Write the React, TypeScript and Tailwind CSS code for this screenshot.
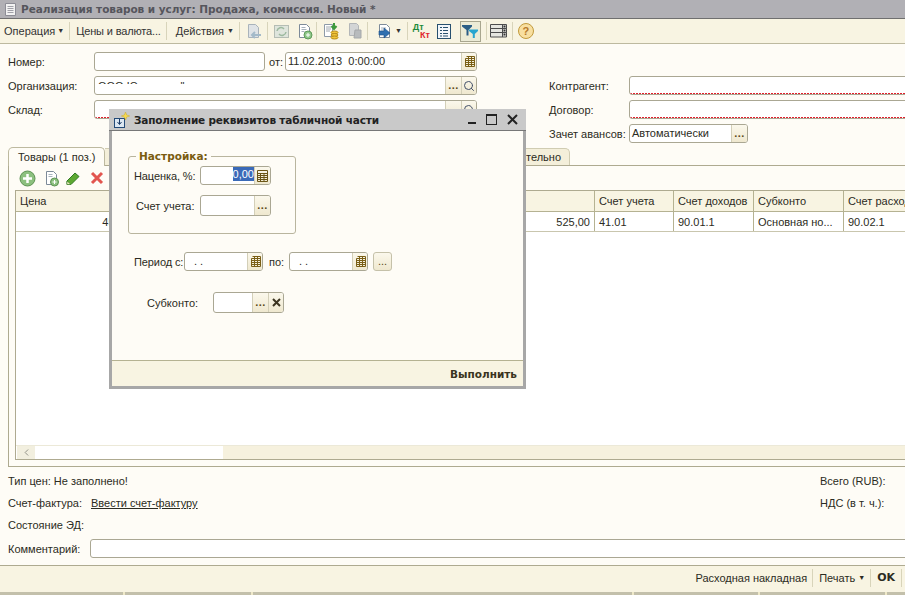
import { ChevronLeft, Search } from "lucide-react";
import type { ReactNode } from "react";

function GridIcon() {
  return (
    <svg width="11" height="11" viewBox="0 0 11 11" fill="none" stroke="#7a5f16" strokeWidth="1">
      <path d="M2.500.5h8v10h-9v-8h9M1.500 4.500h9M1.500 6.500h9M1.500 8.500h9M4.500.5v10M7.500.5v10" />
    </svg>
  );
}

function CalcIcon() {
  return (
    <svg width="11" height="12" viewBox="0 0 11 12" fill="none" stroke="#6b5516" strokeWidth="1">
      <path d="M.5.5h10v11H.5zM.5 3.500h10M.5 5.500h10M.5 7.500h10M.5 9.500h10M3.500 3.500v8M7 3.500v8" />
    </svg>
  );
}

function Dots() {
  return <span className="relative -top-[1px] text-[11px] font-bold tracking-[0.5px] text-[#5a4a1a]">...</span>;
}

function FieldButton({ children, w = "w-[16px]" }: { children: ReactNode; w?: string }) {
  return (
    <div className={`flex h-full shrink-0 items-center justify-center border-l border-[#d3cfb8] bg-gradient-to-b from-[#fbf8ec] to-[#efe8cf] ${w}`}>
      {children}
    </div>
  );
}

function Field({
  className = "",
  children,
  required = false,
  buttons,
}: {
  className?: string;
  children?: ReactNode;
  required?: boolean;
  buttons?: ReactNode;
}) {
  return (
    <div className={`flex h-[19px] shrink-0 overflow-hidden rounded-[3px] border border-[#aaa793] bg-white ${className}`}>
      <div className="flex min-w-0 flex-1 flex-col">
        <div className="min-h-0 flex-1 overflow-hidden pl-[2px] leading-[17px]">{children}</div>
        {required ? (
          <div className="h-px shrink-0 bg-[repeating-linear-gradient(90deg,#e0202c_0_2px,#ffffff_2px_3px)]" />
        ) : null}
      </div>
      {buttons}
    </div>
  );
}

function Sep() {
  return <div className="mx-[5px] h-[18px] w-px shrink-0 bg-[#d8d4ba]" />;
}

function NarrowSep() {
  return <div className="mx-[3px] h-[18px] w-px shrink-0 bg-[#d8d4ba]" />;
}

function DocBase({ faded = false }: { faded?: boolean }) {
  return (
    <path
      d="M3.500 1.500h7l3 3v10h-10z"
      fill={faded ? "#dfe3e6" : "#fff"}
      stroke={faded ? "#a9b3bb" : "#7d8a99"}
    />
  );
}

function Toolbar() {
  return (
    <div className="flex h-[25px] items-center border-b border-[#bdb99f] bg-[#f8f4e2] pl-[4px] text-[#333]">
      <span>Операция</span>
      <span className="ml-[2px] text-[7px]">▼</span>
      <Sep />
      <span className="ml-[1px] tracking-[-0.15px]">Цены и валюта...</span>
      <Sep />
      <span className="ml-[4px]">Действия</span>
      <span className="ml-[3px] text-[7px]">▼</span>
      <Sep />
      <svg width="17" height="17" viewBox="0 0 17 17" fill="none">
        <DocBase faded />
        <path d="M16 12H7M10 9l-3 3 3 3" stroke="#a4bac9" strokeWidth="2" />
      </svg>
      <Sep />
      <svg width="17" height="17" viewBox="0 0 17 17" fill="none">
        <rect x="1.500" y="2.500" width="14" height="12" fill="#dfe5dc" stroke="#b5bdb4" />
        <path d="M4 8a4 4 0 0 1 7-2M13 9a4 4 0 0 1-7 2" stroke="#9db99f" strokeWidth="1.500" />
      </svg>
      <div className="w-[6px]" />
      <svg width="17" height="17" viewBox="0 0 17 17" fill="none">
        <DocBase />
        <path d="M5.500 4.500h4M5.500 6.500h5M5.500 8.500h3" stroke="#a8b3bd" />
        <circle cx="12" cy="12" r="4" fill="#8fc78a" stroke="#5d9a59" />
        <path d="M10 12h4M12 10v4" stroke="#fff" />
      </svg>
      <NarrowSep />
      <div className="w-[2px]" />
      <svg width="18" height="18" viewBox="0 0 18 18" fill="none">
        <path d="M2.500 2.500h8v12h-8z" fill="#fff" stroke="#8d9aa8" />
        <path d="M4 5h5M4 7h5M4 9h4" stroke="#a0a8b0" />
        <path d="M12 1v5M9.500 4l2.500 3 2.500-3" stroke="#3d9a3d" strokeWidth="2" />
        <ellipse cx="12.500" cy="10.500" rx="3.500" ry="1.500" fill="#f1c53b" stroke="#b98d1b" />
        <ellipse cx="12.500" cy="13" rx="3.500" ry="1.500" fill="#f1c53b" stroke="#b98d1b" />
        <ellipse cx="12.500" cy="15.500" rx="3.500" ry="1.500" fill="#f1c53b" stroke="#b98d1b" />
      </svg>
      <div className="w-[7px]" />
      <svg width="17" height="18" viewBox="0 0 17 18" fill="none">
        <path d="M2.500 1.500h7l2 2v10h-9z" fill="#d3d5d6" stroke="#b3b6b8" />
        <path d="M8 8h6v8H7z" fill="#b8bbbd" stroke="#a5a8aa" />
      </svg>
      <NarrowSep />
      <div className="w-[5px]" />
      <svg width="17" height="17" viewBox="0 0 17 17" fill="none">
        <DocBase />
        <path d="M5 5h5M5 7h3" stroke="#a8b3bd" />
        <path d="M3 8h5V5l6 5-6 5v-3H3z" fill="#2f6fb0" stroke="#1d4f86" strokeWidth=".6" />
      </svg>
      <span className="ml-[2px] text-[7px]">▼</span>
      <Sep />
      <div className="flex w-[17px] flex-col font-['Liberation_Sans',sans-serif] text-[9px] leading-[8px] font-bold">
        <span className="text-[#1d8a3a]">Дт</span>
        <span className="self-end text-[#e0242c]">Кт</span>
      </div>
      <div className="w-[6px]" />
      <svg width="16" height="17" viewBox="0 0 16 17" fill="none">
        <rect x="1.500" y="1.500" width="13" height="14" fill="#f2f6fa" stroke="#27506f" />
        <path d="M4 4.500h2M7 4.500h5M4 7.500h2M7 7.500h5M4 10.500h2M7 10.500h5M4 13h2M7 13h5" stroke="#27506f" />
      </svg>
      <div className="w-[8px]" />
      <div className="flex h-[21px] w-[21px] shrink-0 items-center justify-center border border-[#a8a68f] bg-[#ecebd6]">
        <svg width="16" height="13" viewBox="0 0 16 13">
          <path d="M0 0h10v1.500L6.500 5v5.500H4.500V5L0 1.500z" fill="#2a5d85" />
          <path d="M7 4.500h9v1.500l-3.200 3v4h-2V9L7 6z" fill="#29a5cf" />
        </svg>
      </div>
      <Sep />
      <svg className="-ml-[2px]" width="17" height="16" viewBox="0 0 17 16" fill="none">
        <path d="M.5 1.500h16v4H.5zM.5 5.500h16v4H.5zM.5 9.500h16v4.500H.5z" fill="#e6e6e0" stroke="#4c4c4c" />
        <path d="M12.500 1.500v12.500" stroke="#4c4c4c" />
        <rect x="13.500" y="2.500" width="2" height="2" fill="#333" />
        <rect x="13.500" y="6.500" width="2" height="2" fill="#333" />
        <rect x="13.500" y="10.500" width="2" height="2" fill="#333" />
      </svg>
      <Sep />
      <div className="flex h-[16px] w-[16px] items-center justify-center rounded-full border border-[#c19a3c] bg-[#f8dfa0] text-[11px] leading-none font-bold text-[#b5792a]">
        ?
      </div>
    </div>
  );
}

function TabTools() {
  return (
    <div className="flex h-[24px] shrink-0 items-center gap-[7px] pl-[10px]">
      <svg width="17" height="17" viewBox="0 0 17 17">
        <circle cx="8.500" cy="8.500" r="7.500" fill="#8cc07f" stroke="#5c9252" />
        <path d="M4 8.500h9M8.500 4v9" stroke="#fff" strokeWidth="2.500" />
      </svg>
      <svg width="16" height="17" viewBox="0 0 16 17" fill="none">
        <DocBase />
        <path d="M5.500 4.500h4M5.500 6.500h4" stroke="#a8b3bd" />
        <circle cx="11.500" cy="12" r="4" fill="#8cc07f" stroke="#5c9252" />
        <path d="M9.500 12h4M11.500 10v4" stroke="#fff" />
      </svg>
      <svg width="15" height="15" viewBox="0 0 15 15">
        <path d="M1 10 9 2l4 3.500-8 8H1z" fill="#5da832" stroke="#2f7a22" />
        <path d="M1 10l4 3.500H1z" fill="#f2e9c0" stroke="#2f7a22" strokeWidth=".5" />
      </svg>
      <svg className="ml-[2px]" width="14" height="14" viewBox="0 0 14 14">
        <path d="M2 2l10 10M12 2 2 12" stroke="#e2554f" strokeWidth="3" />
      </svg>
    </div>
  );
}

function HeadCell({ className, children }: { className: string; children?: ReactNode }) {
  return (
    <div className={`flex h-full shrink-0 items-center overflow-hidden border-r border-[#b5b292] pl-[4px] whitespace-nowrap ${className}`}>
      {children}
    </div>
  );
}

function Dialog() {
  return (
    <div className="absolute top-[109px] left-[109px] z-20 flex h-[280px] w-[417px] flex-col border-[3px] border-t-0 border-[#a7a7a7] bg-[#fefcf6]">
      <div className="-mx-[3px] flex h-[22px] shrink-0 items-center border-b border-[#777] bg-[#c9c9c9] pr-[8px] pl-[4px] font-['DejaVu_Sans',sans-serif] text-[10.5px] font-bold text-[#222]">
        <svg width="18" height="18" viewBox="0 0 18 18" fill="none">
          <rect x="1.500" y="7.500" width="10" height="9" fill="#dce7f2" stroke="#234a78" />
          <path d="M6.500 8v5M4.500 11l2 2.500 2-2.500" stroke="#1a3a66" />
          <path d="M12.500 1l1.200 3 3 1-3 1-1.200 3-1.200-3-3-1 3-1z" fill="#f6d94c" stroke="#c9a92e" strokeWidth=".5" />
        </svg>
        <span className="ml-[3px] flex-1 tracking-[-0.18px]">Заполнение реквизитов табличной части</span>
        <div className="mt-[6px] h-[2px] w-[8px] bg-[#222]" />
        <div className="ml-[10px] h-[11px] w-[11px] border-[1.500px] border-t-2 border-[#222]" />
        <svg className="ml-[10px]" width="11" height="11" viewBox="0 0 11 11">
          <path d="M1 1l9 9M10 1l-9 9" stroke="#222" strokeWidth="2" />
        </svg>
      </div>

      <div className="flex-1 pt-[25px] pl-[16px]">
        <div className="relative flex h-[78px] w-[168px] flex-col rounded-[3px] border border-[#b9b59e] pt-[9px]">
          <span className="absolute -top-[8px] left-[7px] bg-[#fefcf6] px-[3px] font-['DejaVu_Sans',sans-serif] text-[10.5px] leading-[14px] font-bold text-[#7a5c10]">
            Настройка:
          </span>
          <div className="flex items-center pl-[5px]">
            <span className="w-[66px] tracking-[-0.1px]">Наценка, %:</span>
            <Field
              className="w-[71px]"
              buttons={
                <FieldButton>
                  <CalcIcon />
                </FieldButton>
              }
            >
              <div className="flex justify-end">
                <span className="bg-[#3a6ab8] leading-[14px] text-white">0,00</span>
              </div>
            </Field>
          </div>
          <div className="mt-[10px] flex items-center pl-[7px]">
            <span className="w-[64px]">Счет учета:</span>
            <Field
              className="h-[21px] w-[71px]"
              buttons={
                <FieldButton>
                  <Dots />
                </FieldButton>
              }
            />
          </div>
        </div>

        <div className="mt-[18px] ml-[6px] flex items-center">
          <span className="w-[50px] tracking-[-0.1px]">Период с:</span>
          <Field
            className="w-[79px]"
            buttons={
              <FieldButton w="w-[15px]">
                <GridIcon />
              </FieldButton>
            }
          >
            <span className="pl-[7px]">. .</span>
          </Field>
          <span className="ml-[6px] w-[20px]">по:</span>
          <Field
            className="w-[79px]"
            buttons={
              <FieldButton w="w-[15px]">
                <GridIcon />
              </FieldButton>
            }
          >
            <span className="pl-[7px]">. .</span>
          </Field>
          <div className="ml-[5px] flex h-[19px] w-[19px] items-center justify-center rounded-[3px] border border-[#c5c1a9] bg-gradient-to-b from-[#fbf8ec] to-[#efe8cf]">
            <span className="relative -top-[1px] text-[#5a4a1a]">...</span>
          </div>
        </div>

        <div className="mt-[21px] ml-[19px] flex items-center">
          <span className="w-[66px]">Субконто:</span>
          <Field
            className="h-[21px] w-[71px]"
            buttons={
              <>
                <FieldButton>
                  <Dots />
                </FieldButton>
                <FieldButton w="w-[15px]">
                  <svg width="9" height="9" viewBox="0 0 9 9">
                    <path d="M1 1l7 7M8 1 1 8" stroke="#3c3420" strokeWidth="2" />
                  </svg>
                </FieldButton>
              </>
            }
          />
        </div>
      </div>

      <div className="flex h-[26px] shrink-0 items-center justify-end border-t border-[#b5b292] bg-[#f8f4e2] pr-[6px] font-['DejaVu_Sans',sans-serif] text-[10.5px] font-bold text-[#3a3420]">
        Выполнить
      </div>
    </div>
  );
}

export default function App() {
  return (
    <div className="relative flex h-[595px] w-[905px] flex-col overflow-hidden bg-[#fefcf6] font-['Liberation_Sans',sans-serif] text-[11px] leading-[14px] whitespace-nowrap text-[#2b2b22]">
      <div className="flex h-[19px] shrink-0 items-center border-b border-[#6f6f6f] bg-[#b1b0b5] pl-[4px] font-['DejaVu_Sans',sans-serif] text-[10.5px] font-bold tracking-[-0.05px] text-[#55555c]">
        <svg width="13" height="15" viewBox="0 0 13 15" fill="none">
          <path d="M1.500 1.500h10v12h-10z" fill="#f2f2f2" stroke="#8d8d96" />
          <path d="M3.500 4.500h6M3.500 6.500h6M3.500 8.500h6M3.500 10.500h6" stroke="#a0a0a8" />
        </svg>
        <span className="ml-[4px]">Реализация товаров и услуг: Продажа, комиссия. Новый *</span>
      </div>

      <Toolbar />

      <div className="flex h-[103px] shrink-0 pt-[8px] pl-[8px]">
        <div className="flex w-[541px] shrink-0 flex-col gap-[5px]">
          <div className="flex items-center">
            <span className="w-[86px]">Номер:</span>
            <Field className="w-[171px]" />
            <span className="ml-[4px] w-[16px]">от:</span>
            <Field
              className="w-[192px]"
              buttons={
                <FieldButton w="w-[15px]">
                  <GridIcon />
                </FieldButton>
              }
            >
              11.02.2013&nbsp; 0:00:00
            </Field>
          </div>
          <div className="flex items-center">
            <span className="w-[86px]">Организация:</span>
            <Field
              className="w-[383px]"
              buttons={
                <>
                  <FieldButton>
                    <Dots />
                  </FieldButton>
                  <FieldButton w="w-[15px]">
                    <Search size={12} strokeWidth={2} color="#44516a" />
                  </FieldButton>
                </>
              }
            >
              <div className="mt-[2px] h-[5px] overflow-hidden pl-[1px] leading-[14px]">ООО Ю&nbsp;&nbsp;&nbsp;&nbsp;&nbsp;&nbsp;&nbsp;&nbsp;&nbsp;&nbsp;&nbsp;&nbsp;&nbsp;&nbsp;"</div>
            </Field>
          </div>
          <div className="flex items-center">
            <span className="w-[86px]">Склад:</span>
            <Field
              required
              className="w-[383px]"
              buttons={
                <>
                  <FieldButton>
                    <Dots />
                  </FieldButton>
                  <FieldButton w="w-[15px]">
                    <Search size={12} strokeWidth={2} color="#44516a" />
                  </FieldButton>
                </>
              }
            />
          </div>
        </div>
        <div className="flex flex-1 flex-col gap-[5px] pt-[24px]">
          <div className="flex items-center">
            <span className="w-[80px] shrink-0">Контрагент:</span>
            <Field required className="w-[300px]" />
          </div>
          <div className="flex items-center">
            <span className="w-[80px] shrink-0">Договор:</span>
            <Field required className="w-[300px]" />
          </div>
          <div className="flex items-center">
            <span className="w-[80px] shrink-0">Зачет авансов:</span>
            <Field
              className="w-[119px]"
              buttons={
                <FieldButton>
                  <Dots />
                </FieldButton>
              }
            >
              Автоматически
            </Field>
          </div>
        </div>
      </div>

      <div className="relative z-10 -mb-px flex h-[19px] shrink-0 pl-[8px]">
        <div className="flex w-[97px] items-center rounded-t-[5px] border border-b-0 border-[#bdb99f] bg-[#fefcf6] pl-[9px]">
          Товары (1 поз.)
        </div>
        <div className="mt-[1px] flex h-[17px] w-[465px] items-center justify-end rounded-tr-[5px] border-t border-r border-[#d0ccb2] bg-[#f4efda] pr-[8px]">
          Дополнительно
        </div>
      </div>

      <div className="ml-[8px] flex h-[302px] shrink-0 flex-col border-y border-l border-[#aeaa90]">
        <TabTools />
        <div className="mb-[6px] ml-[6px] flex flex-1 flex-col border-y border-l border-[#aeaa90] bg-white">
          <div className="flex h-[21px] shrink-0 border-b border-[#b5b292] bg-[#f8f4e2]">
            <HeadCell className="w-[125px]">Цена</HeadCell>
            <HeadCell className="w-[454px]" />
            <HeadCell className="w-[79px]">Счет учета</HeadCell>
            <HeadCell className="w-[80px]">Счет доходов</HeadCell>
            <HeadCell className="w-[90px]">Субконто</HeadCell>
            <HeadCell className="w-[80px]">Счет расходов</HeadCell>
          </div>
          <div className="flex h-[20px] shrink-0 border-b border-[#c9c6ae]">
            <HeadCell className="w-[125px] justify-end pr-[4px]">450,00</HeadCell>
            <HeadCell className="w-[454px] justify-end pr-[4px]">525,00</HeadCell>
            <HeadCell className="w-[79px]">41.01</HeadCell>
            <HeadCell className="w-[80px]">90.01.1</HeadCell>
            <HeadCell className="w-[90px]">Основная но...</HeadCell>
            <HeadCell className="w-[80px]">90.02.1</HeadCell>
          </div>
          <div className="flex-1" />
          <div className="flex h-[14px] shrink-0 border-t border-[#ece9d8] bg-white">
            <div className="ml-[1px] flex w-[18px] items-center justify-center bg-[#f2efdf]">
              <ChevronLeft size={11} color="#8b8b80" />
            </div>
            <div className="w-[188px]" />
            <div className="flex-1 bg-[#f6f1de]" />
          </div>
        </div>
      </div>

      <div className="flex flex-1 flex-col pt-[7px] pl-[8px]">
        <div className="flex h-[14px] items-center">
          <span className="w-[812px]">Тип цен: Не заполнено!</span>
          <span>Всего (RUB):</span>
        </div>
        <div className="mt-[8px] flex h-[14px] items-center">
          <span className="w-[83px]">Счет-фактура:</span>
          <span className="w-[729px] underline">Ввести счет-фактуру</span>
          <span>НДС (в т. ч.):</span>
        </div>
        <div className="mt-[8px] h-[14px]">Состояние ЭД:</div>
        <div className="mt-[7px] flex items-center">
          <span className="w-[82px] shrink-0">Комментарий:</span>
          <Field className="w-[830px]" />
        </div>
      </div>

      <div className="flex h-[27px] shrink-0 items-center justify-end border-t border-[#aeaa90] bg-[#f8f4e2] pb-[2px]">
        <span>Расходная накладная</span>
        <div className="mr-[1px]"><Sep /></div>
        <span>Печать</span>
        <span className="ml-[3px] text-[7px]">▼</span>
        <Sep />
        <span className="mx-[1px] font-['DejaVu_Sans',sans-serif] text-[11px] font-bold">OK</span>
        <div className="-mr-[2px]"><Sep /></div>
      </div>
      <div className="flex h-[3px] shrink-0 bg-[#c3c0ab]">
        <div className="w-[125px] border-r-2 border-[#efe9c9]" />
        <div className="w-[128px] border-r-2 border-[#efe9c9]" />
        <div className="w-[381px] border-r-2 border-[#efe9c9]" />
        <div className="w-[126px] border-r-2 border-[#efe9c9]" />
        <div className="w-[127px] border-r-2 border-[#efe9c9]" />
      </div>

      <Dialog />
    </div>
  );
}
